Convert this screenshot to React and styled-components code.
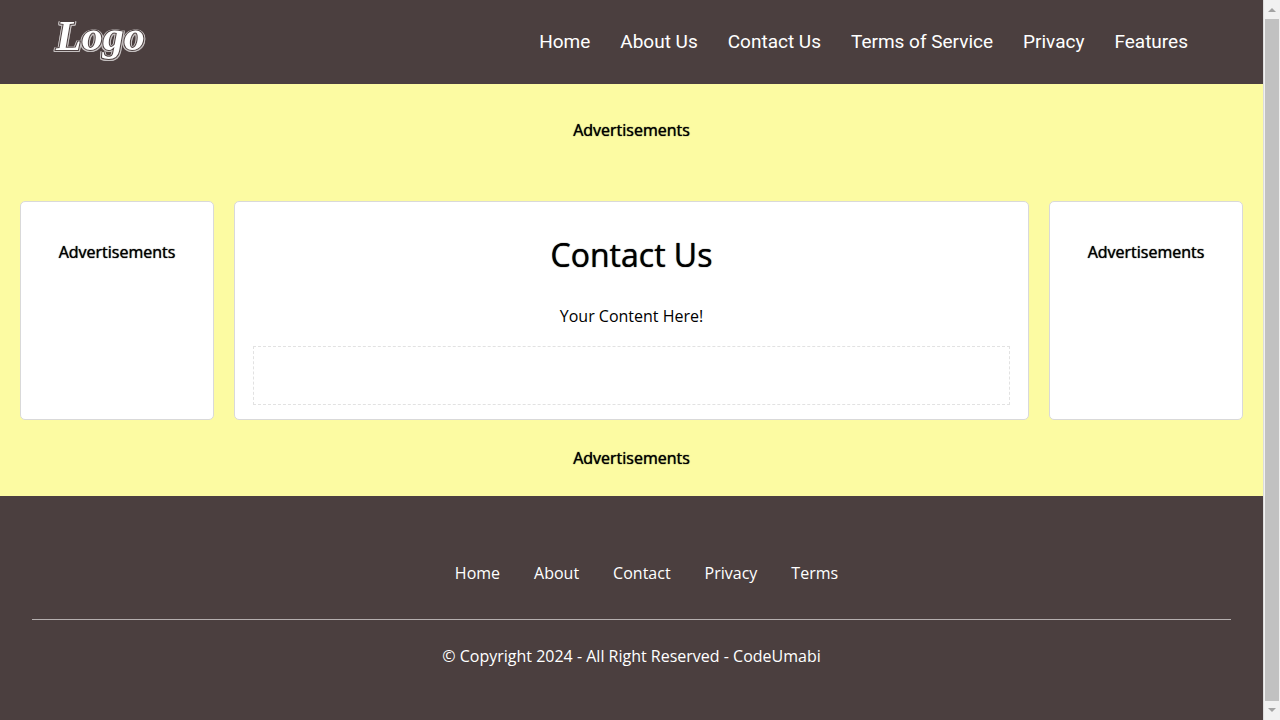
import styled, { createGlobalStyle } from "styled-components";

const GlobalStyle = createGlobalStyle`
  * {
    box-sizing: border-box;
  }

  body {
    margin: 0;
    background: #fcfba2;
    color: #000;
    font-family: "Open Sans", sans-serif;
    font-size: 16px;
    line-height: 24px;
  }

  h1, h2, p, ul {
    margin: 0;
    padding: 0;
  }
`;

const Shell = styled.div`
  display: flex;
  min-height: 100vh;
`;

const Page = styled.div`
  flex: 1;
  min-width: 0;
  display: flex;
  flex-direction: column;
`;

const Header = styled.header`
  display: flex;
  align-items: center;
  justify-content: space-between;
  height: 84px;
  padding: 0 75px 0 56px;
  background: #4b3f3f;
`;

const Logo = styled.a`
  padding-bottom: 12px;
  color: #fff;
  font-family: "Liberation Serif", serif;
  font-size: 42px;
  font-weight: bold;
  font-style: italic;
  line-height: 48px;
  text-decoration: none;
  -webkit-text-stroke: 2px #4b3f3f;
  paint-order: stroke fill;
  filter: drop-shadow(1px 0 0 #c4bfbf) drop-shadow(-1px 0 0 #c4bfbf)
    drop-shadow(0 1px 0 #c4bfbf);
`;

const NavList = styled.ul`
  display: flex;
  gap: 30px;
  list-style: none;
`;

const NavLink = styled.a`
  color: #fff;
  font-family: Roboto, sans-serif;
  font-size: 19px;
  text-decoration: none;
`;

const AdBanner = styled.section`
  display: flex;
  justify-content: center;
  padding: ${(props) => (props.$bottom ? "26px 0" : "34px 0 59px")};
`;

const AdTitle = styled.h2`
  font-size: 16px;
  font-weight: 500;
  line-height: 24px;
  text-shadow: 0 0 1px #000;
`;

const Columns = styled.main`
  display: grid;
  grid-template-columns: 194fr 795fr 194fr;
  gap: 20px;
  padding: 0 20px;
`;

const Card = styled.section`
  min-height: 219px;
  padding: ${(props) => (props.$wide ? "28px 18px 14px" : "38px 18px")};
  border: 1px solid #d9d9d9;
  border-radius: 5px;
  background: #fff;
  text-align: center;
`;

const Title = styled.h1`
  font-size: 32px;
  font-weight: 500;
  line-height: 50px;
  text-shadow: 0 0 1px #000;
`;

const Intro = styled.p`
  padding: 24px 0 18px;
`;

const Placeholder = styled.div`
  height: 59px;
  border: 1px dashed #e2e2e2;
`;

const Footer = styled.footer`
  flex: 1;
  padding: 65px 32px 52px;
  background: #4b3f3f;
  color: #fff;
  text-align: center;
`;

const FooterList = styled.ul`
  display: flex;
  justify-content: center;
  gap: 34px;
  padding: 0 0 34px 30px;
  list-style: none;
`;

const FooterLink = styled.a`
  color: #fff;
  text-decoration: none;
`;

const Copyright = styled.p`
  padding-top: 24px;
  border-top: 1px solid #b5afaf;
`;

const ScrollBar = styled.div`
  position: sticky;
  top: 0;
  display: flex;
  flex-direction: column;
  align-items: center;
  justify-content: space-between;
  width: 17px;
  height: 100vh;
  padding: 7px 0;
  border-left: 1px solid #dcdcdc;
  background: #f1f1f1;
`;

const Thumb = styled.div`
  flex: 1;
  width: 14px;
  margin: 7px 0;
  background: #c1c1c1;
`;

const navItems = [
  "Home",
  "About Us",
  "Contact Us",
  "Terms of Service",
  "Privacy",
  "Features",
];

const footerItems = ["Home", "About", "Contact", "Privacy", "Terms"];

export default function App() {
  return (
    <>
      <GlobalStyle />
      <Shell>
        <Page>
          <Header>
            <Logo href="#">Logo</Logo>
            <nav>
              <NavList>
                {navItems.map((item) => (
                  <li key={item}>
                    <NavLink href="#">{item}</NavLink>
                  </li>
                ))}
              </NavList>
            </nav>
          </Header>

          <AdBanner>
            <AdTitle>Advertisements</AdTitle>
          </AdBanner>

          <Columns>
            <Card>
              <AdTitle>Advertisements</AdTitle>
            </Card>
            <Card $wide>
              <Title>Contact Us</Title>
              <Intro>Your Content Here!</Intro>
              <Placeholder />
            </Card>
            <Card>
              <AdTitle>Advertisements</AdTitle>
            </Card>
          </Columns>

          <AdBanner $bottom>
            <AdTitle>Advertisements</AdTitle>
          </AdBanner>

          <Footer>
            <FooterList>
              {footerItems.map((item) => (
                <li key={item}>
                  <FooterLink href="#">{item}</FooterLink>
                </li>
              ))}
            </FooterList>
            <Copyright>
              © Copyright 2024 - All Right Reserved - CodeUmabi
            </Copyright>
          </Footer>
        </Page>

        <ScrollBar aria-hidden="true">
          <svg width="8" height="5" viewBox="0 0 8 5">
            <path d="M0 5L4 1L8 5Z" fill="#a3a3a3" />
          </svg>
          <Thumb />
          <svg width="8" height="5" viewBox="0 0 8 5">
            <path d="M0 0L4 4L8 0Z" fill="#a3a3a3" />
          </svg>
        </ScrollBar>
      </Shell>
    </>
  );
}
